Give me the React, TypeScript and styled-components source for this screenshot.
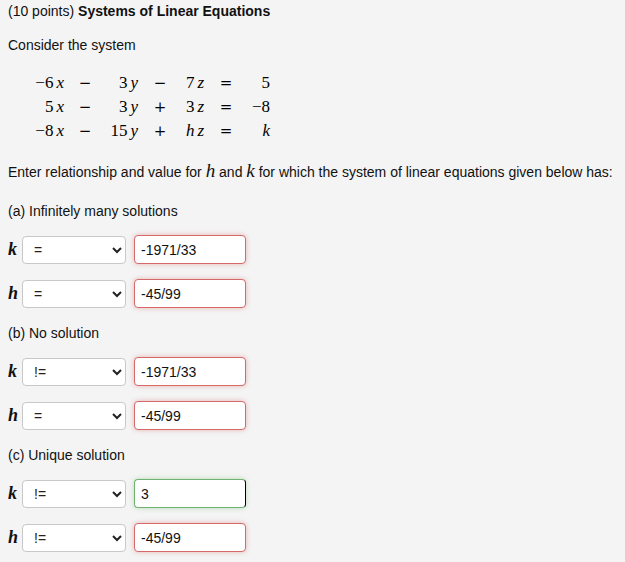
import { Fragment } from "react";
import styled, { createGlobalStyle } from "styled-components";

const GlobalStyle = createGlobalStyle`
  body {
    margin: 0;
    background: #f4f4f4;
    font-family: "Liberation Sans", Arial, sans-serif;
    font-size: 14px;
    color: #111;
  }
`;

const Page = styled.div`
  padding: 1px 8px 8px 8px;
  display: flex;
  flex-direction: column;
`;

const Line = styled.div<{ $top?: number }>`
  line-height: 20px;
  height: 20px;
  margin-top: ${(p) => p.$top ?? 0}px;
  white-space: nowrap;
`;

const Bold = styled.b`
  font-weight: bold;
`;

const MathVar = styled.i`
  font-family: "Liberation Serif", "Times New Roman", serif;
  font-style: italic;
  font-size: 19px;
`;

const EqGrid = styled.div`
  margin-top: 16px;
  margin-left: 20px;
  display: grid;
  grid-template-columns: 36px 42px 32px 44px 22px 44px 22px;
  grid-auto-rows: 24px;
  align-items: center;
  font-family: "Liberation Serif", "Times New Roman", serif;
  font-size: 17px;
  color: #000;
`;

const Cell = styled.span<{ $align: "right" | "center" }>`
  text-align: ${(p) => p.$align};
  white-space: nowrap;
  i {
    font-style: italic;
    margin-left: 3px;
  }
`;

const Op = styled.span`
  text-align: center;
  font-family: "DejaVu Serif", "Liberation Serif", serif;
  font-size: 15px;
`;

const Section = styled.div<{ $top: number }>`
  margin-top: ${(p) => p.$top}px;
  display: flex;
  flex-direction: column;
`;

const Row = styled.div`
  display: flex;
  align-items: center;
  height: 29px;
  margin-top: 14px;
  & + & {
    margin-top: 15px;
  }
`;

const RowLabel = styled.span`
  width: 14px;
  font-family: "Liberation Serif", "Times New Roman", serif;
  font-style: italic;
  font-weight: bold;
  font-size: 18px;
`;

const Select = styled.select`
  width: 104px;
  height: 28px;
  border: 1px solid #c8c8c8;
  border-radius: 4px;
  background: #fff;
  padding-left: 7px;
  font-family: "Liberation Sans", Arial, sans-serif;
  font-size: 14px;
  color: #222;
`;

const Answer = styled.input<{ $ok?: boolean }>`
  margin-left: 8px;
  width: 112px;
  height: 29px;
  box-sizing: border-box;
  padding: 0 6px;
  background: #fff;
  border: 1px solid ${(p) => (p.$ok ? "#6fb26f" : "#d46a6a")};
  ${(p) => (p.$ok ? "border-right: 1px solid #000;" : "")}
  border-radius: 4px;
  box-shadow: 0 0 5px
    ${(p) => (p.$ok ? "rgba(80, 170, 80, 0.35)" : "rgba(210, 60, 60, 0.35)")};
  font-family: "Liberation Sans", Arial, sans-serif;
  font-size: 14px;
  color: #111;
  outline: none;
`;

type Eq = [string, string, string, string, string, string, string][];

const rows: Eq = [
  ["−6", "−", "3", "−", "7", "=", "5"],
  ["5", "−", "3", "+", "3", "=", "−8"],
  ["−8", "−", "15", "+", "h", "=", "k"],
];

type AnswerItem = { v: "k" | "h"; op: string; val: string; ok?: boolean };

const parts: { title: string; top: number; items: AnswerItem[] }[] = [
  {
    title: "(a) Infinitely many solutions",
    top: 20,
    items: [
      { v: "k", op: "=", val: "-1971/33" },
      { v: "h", op: "=", val: "-45/99" },
    ],
  },
  {
    title: "(b) No solution",
    top: 15,
    items: [
      { v: "k", op: "!=", val: "-1971/33" },
      { v: "h", op: "=", val: "-45/99" },
    ],
  },
  {
    title: "(c) Unique solution",
    top: 15,
    items: [
      { v: "k", op: "!=", val: "3", ok: true },
      { v: "h", op: "!=", val: "-45/99" },
    ],
  },
];

const App = () => {
  return (
    <Page>
      <GlobalStyle />
      <Line>
        (10 points) <Bold>Systems of Linear Equations</Bold>
      </Line>
      <Line $top={14}>Consider the system</Line>
      <EqGrid>
        {rows.map((r, i) => (
          <Fragment key={i}>
            <Cell $align="right">
              {r[0]}
              <i>x</i>
            </Cell>
            <Op>{r[1]}</Op>
            <Cell $align="right">
              {r[2]}
              <i>y</i>
            </Cell>
            <Op>{r[3]}</Op>
            <Cell $align="right">
              {r[4] === "h" ? <i style={{ marginLeft: 0 }}>h</i> : r[4]}
              <i>z</i>
            </Cell>
            <Op>{r[5]}</Op>
            <Cell $align="right">
              {r[6] === "k" ? <i>k</i> : r[6]}
            </Cell>
          </Fragment>
        ))}
      </EqGrid>
      <Line $top={18}>
        Enter relationship and value for <MathVar>h</MathVar> and{" "}
        <MathVar>k</MathVar> for which the system of linear equations given
        below has:
      </Line>
      {parts.map((p) => (
        <Section key={p.title} $top={p.top}>
          <Line>{p.title}</Line>
          {p.items.map((it, j) => (
            <Row key={j}>
              <RowLabel>{it.v}</RowLabel>
              <Select defaultValue={it.op}>
                <option value="=">=</option>
                <option value="!=">!=</option>
              </Select>
              <Answer type="text" defaultValue={it.val} $ok={it.ok} />
            </Row>
          ))}
        </Section>
      ))}
    </Page>
  );
};

export default App;
